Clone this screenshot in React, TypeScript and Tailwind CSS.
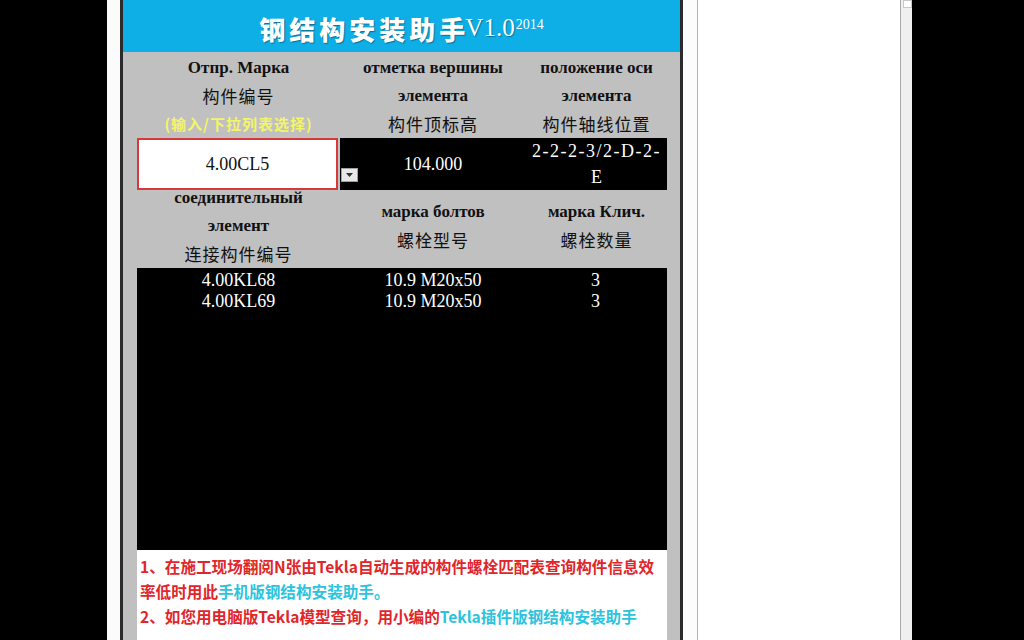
import React from 'react';

const serif = "font-['Liberation_Serif','Noto_Sans_CJK_SC',serif]";
const cjk = "font-['Noto_Sans_CJK_SC',sans-serif]";

function HeadLine({ children, kind }: { children: React.ReactNode; kind: 'ru' | 'zh' | 'hint' }) {
  if (kind === 'ru') {
    return <div className={`${serif} h-[28px] leading-[28px] text-[17px] font-bold text-[#111]`}>{children}</div>;
  }
  if (kind === 'hint') {
    return (
      <div className={`${cjk} h-[28px] leading-[28px] text-[15px] font-bold text-[#f4f46a] tracking-[1px]`}>
        {children}
      </div>
    );
  }
  return <div className={`${cjk} h-[28px] leading-[28px] text-[17px] text-[#111] tracking-[1px]`}>{children}</div>;
}

const bolts = [
  { mark: '4.00KL68', bolt: '10.9 M20x50', qty: '3' },
  { mark: '4.00KL69', bolt: '10.9 M20x50', qty: '3' },
];

export default function App() {
  return (
    <div className="flex w-[1024px] h-[640px] overflow-hidden bg-black">
      <div className="w-[107px] bg-black" />
      <div className="w-[13px] bg-[#fbfbfb]" />

      {/* main sheet */}
      <div className="w-[563px] flex flex-col border-x-[3px] border-[#2b2b2b] bg-[#c0c0c0]">
        <div className="h-[52px] shrink-0 bg-[#0eaee6] flex items-center justify-center pt-[4px]">
          <span
            className={`${cjk} text-white text-[26px] font-black tracking-[4px] mr-[-4px] [text-shadow:1px_1px_1px_rgba(0,0,0,0.35)]`}
          >
            钢结构安装助手
          </span>
          <span className={`${serif} text-white text-[25px] [text-shadow:1px_1px_1px_rgba(0,0,0,0.35)]`}>V1.0</span>
          <span className={`${serif} text-white text-[14px] self-start mt-[10px] ml-[1px]`}>2014</span>
        </div>

        <div className="flex-1 flex flex-col w-[530px] ml-[14px]">
          {/* first header */}
          <div className="grid grid-cols-[203px_186px_141px] pt-[2px] text-center">
            <div>
              <HeadLine kind="ru">Отпр. Марка</HeadLine>
              <HeadLine kind="zh">构件编号</HeadLine>
              <HeadLine kind="hint">(输入/下拉列表选择)</HeadLine>
            </div>
            <div>
              <HeadLine kind="ru">отметка вершины</HeadLine>
              <HeadLine kind="ru">элемента</HeadLine>
              <HeadLine kind="zh">构件顶标高</HeadLine>
            </div>
            <div>
              <HeadLine kind="ru">положение оси</HeadLine>
              <HeadLine kind="ru">элемента</HeadLine>
              <HeadLine kind="zh">构件轴线位置</HeadLine>
            </div>
          </div>

          {/* input row */}
          <div className="relative grid grid-cols-[203px_186px_141px] h-[45px] text-center">
            <div className="bg-white border-2 border-[#d9383a] w-[201px] flex items-center justify-center">
              <span className={`${serif} text-[18px] text-[#111]`}>4.00CL5</span>
            </div>
            <div className="bg-black flex items-center justify-center">
              <span className={`${serif} text-[18px] text-white`}>104.000</span>
            </div>
            <div className="bg-black flex flex-col items-center justify-center">
              <span className={`${serif} text-[18px] leading-[26px] tracking-[1.5px] text-white`}>2-2-2-3/2-D-2-</span>
              <span className={`${serif} text-[18px] leading-[26px] text-white`}>E</span>
            </div>
            <div className="absolute left-[204px] top-[30px] w-[17px] h-[14px] bg-[#e8e8e8] border border-[#a0a0a0] flex items-center justify-center">
              <svg width="9" height="6" viewBox="0 0 9 6">
                <path d="M1 1h7L4.5 5z" fill="#333" />
              </svg>
            </div>
          </div>

          {/* second header */}
          <div className="grid grid-cols-[203px_186px_141px] h-[85px] pt-[1px] text-center">
            <div>
              <HeadLine kind="ru">соединительный</HeadLine>
              <HeadLine kind="ru">элемент</HeadLine>
              <HeadLine kind="zh">连接构件编号</HeadLine>
            </div>
            <div className="flex flex-col justify-center">
              <HeadLine kind="ru">марка болтов</HeadLine>
              <HeadLine kind="zh">螺栓型号</HeadLine>
            </div>
            <div className="flex flex-col justify-center">
              <HeadLine kind="ru">марка Клич.</HeadLine>
              <HeadLine kind="zh">螺栓数量</HeadLine>
            </div>
          </div>

          {/* bolt list */}
          <div className="h-[282px] bg-black pt-[2px]">
            {bolts.map((b) => (
              <div
                key={b.mark}
                className={`${serif} grid grid-cols-[203px_186px_141px] h-[21px] leading-[21px] text-[18px] text-white text-center`}
              >
                <div>{b.mark}</div>
                <div>{b.bolt}</div>
                <div className="pr-[2px]">{b.qty}</div>
              </div>
            ))}
          </div>

          {/* notes */}
          <div className={`${cjk} flex-1 bg-white pt-[4px] pl-[3px] text-[15.6px] leading-[25px] font-bold whitespace-nowrap`}>
            <div className="text-[#e0262b]">1、在施工现场翻阅N张由Tekla自动生成的构件螺栓匹配表查询构件信息效</div>
            <div>
              <span className="text-[#e0262b]">率低时用此</span>
              <span className="text-[#2cc3de]">手机版钢结构安装助手。</span>
            </div>
            <div>
              <span className="text-[#e0262b]">2、如您用电脑版Tekla模型查询，用小编的</span>
              <span className="text-[#2cc3de]">Tekla插件版钢结构安装助手</span>
            </div>
          </div>
        </div>
      </div>

      {/* right side window */}
      <div className="w-[14px] bg-[#fcfcfc]" />
      <div className="w-[1px] bg-[#b4b4b4]" />
      <div className="w-[202px] bg-white" />
      <div className="w-[1px] bg-[#a8a8a8]" />
      <div className="w-[11px] bg-[#f0f0f0] relative">
        <div className="absolute left-[2px] top-0 w-[9px] h-[8px] border border-[#c8c8c8] bg-white" />
      </div>
      <div className="w-[112px] bg-black" />
    </div>
  );
}
